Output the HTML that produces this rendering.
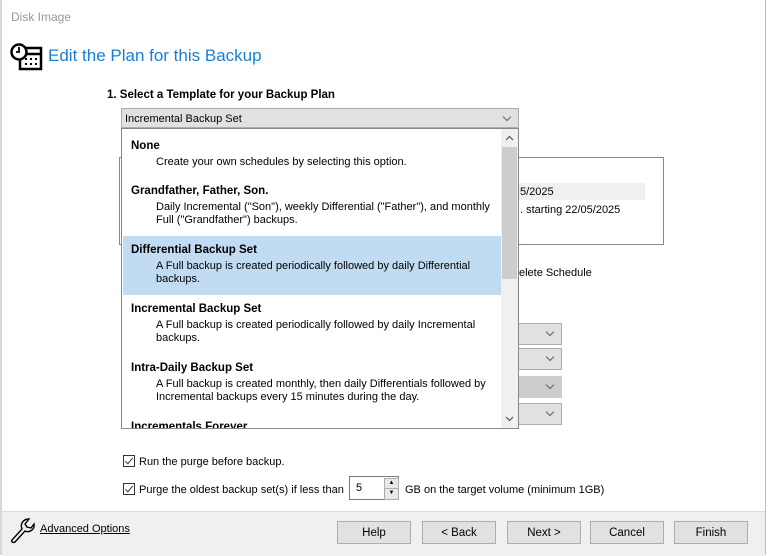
<!DOCTYPE html>
<html><head><style>
body{margin:0;width:770px;height:555px;position:relative;background:#fff;font-family:"Liberation Sans",Tahoma,sans-serif;font-size:11px;color:#000;overflow:hidden}
.a{position:absolute}
.cb{position:absolute;height:20px;border:1px solid #adadad;background:#e1e1e1;box-sizing:border-box}
.cb:after{content:"";position:absolute;right:8px;top:5px;width:5px;height:5px;border-right:1px solid #606060;border-bottom:1px solid #606060;transform:rotate(45deg)}
.btn{position:absolute;top:521px;width:74px;height:23px;border:1px solid #adadad;background:#e1e1e1;box-sizing:border-box;text-align:center;line-height:23px;font-size:11.5px}
.chk{position:absolute;width:12px;height:12px;border:1px solid #333;background:#fff;box-sizing:border-box}
.chk:after{content:"";position:absolute;left:3px;top:0px;width:3px;height:7px;border-right:1.3px solid #333;border-bottom:1.3px solid #333;transform:rotate(40deg)}
.it b{position:absolute;left:9px;font-size:11.5px}
.it span{position:absolute;left:34px;line-height:13px;width:340px}
</style></head><body>
<div class="a" style="left:0;top:0;width:2px;height:555px;background:#d8d8d8"></div>
<div class="a" style="left:765px;top:0;width:1px;height:555px;background:#bbb"></div>
<div class="a" style="left:11px;top:10px;color:#999;font-size:12px">Disk Image</div>
<svg class="a" style="left:10px;top:42px" width="34" height="30" viewBox="0 0 34 30">
<rect x="10" y="6" width="21" height="21" fill="#fff" stroke="#000" stroke-width="2.5"/>
<line x1="10" y1="12" x2="31" y2="12" stroke="#000" stroke-width="2.5"/>
<g fill="#000"><rect x="15" y="16" width="2" height="2"/><rect x="20" y="16" width="2" height="2"/><rect x="25" y="16" width="2" height="2"/><rect x="15" y="21" width="2" height="2"/><rect x="20" y="21" width="2" height="2"/><rect x="25" y="21" width="2" height="2"/></g>
<circle cx="9" cy="10" r="7.5" fill="#fff" stroke="#000" stroke-width="2.5"/>
<path d="M9 5v5h-3" fill="none" stroke="#000" stroke-width="1.8"/>
</svg>
<div class="a" style="left:48px;top:46px;color:#1a7fd4;font-size:17px">Edit the Plan for this Backup</div>
<div class="a" style="left:107px;top:89px;font-weight:bold;font-size:11.5px">1. Select a Template for your Backup Plan</div>
<div class="cb" style="left:121px;top:108px;width:398px;border-color:#adadad"><span class="a" style="left:3px;top:4px">Incremental Backup Set</span></div>
<div class="a" style="left:119px;top:157px;width:545px;height:88px;border:1px solid #828790;box-sizing:border-box"></div>
<div class="a" style="left:500px;top:183px;width:145px;height:17px;background:#f0f0f0"></div>
<div class="a" style="left:520px;top:186px">5/2025</div>
<div class="a" style="left:520px;top:204px">. starting 22/05/2025</div>
<div class="a" style="left:519px;top:267px">elete Schedule</div>
<div class="cb" style="left:505px;top:323px;width:57px;height:22px"></div>
<div class="cb" style="left:505px;top:348px;width:57px;height:22px"></div>
<div class="cb" style="left:505px;top:376px;width:57px;height:22px;background:#ccc;border-color:#ccc"></div>
<div class="cb" style="left:505px;top:403px;width:57px;height:22px"></div>
<div class="a" style="left:121px;top:128px;width:398px;height:301px;border:1px solid #828790;background:#fff;box-sizing:border-box;overflow:hidden">
<div class="a" style="left:1px;top:107px;width:378px;height:59px;background:#c1dcf2"></div>
<div class="it"><b style="top:11px">None</b><span style="top:27px">Create your own schedules by selecting this option.</span></div>
<div class="it"><b style="top:56px">Grandfather, Father, Son.</b><span style="top:72px">Daily Incremental ("Son"), weekly Differential ("Father"), and monthly<br>Full ("Grandfather") backups.</span></div>
<div class="it"><b style="top:115px">Differential Backup Set</b><span style="top:131px">A Full backup is created periodically followed by daily Differential<br>backups.</span></div>
<div class="it"><b style="top:174px">Incremental Backup Set</b><span style="top:190px">A Full backup is created periodically followed by daily Incremental<br>backups.</span></div>
<div class="it"><b style="top:233px">Intra-Daily Backup Set</b><span style="top:249px">A Full backup is created monthly, then daily Differentials followed by<br>Incremental backups every 15 minutes during the day.</span></div>
<div class="it"><b style="top:292px">Incrementals Forever</b></div>
<div class="a" style="left:379px;top:0;width:17px;height:299px;background:#f0f0f0"></div>
<div class="a" style="left:380px;top:18px;width:15px;height:132px;background:#cdcdcd"></div>
<svg class="a" style="left:383px;top:6px" width="9" height="6"><path d="M1 5L4.5 1.5L8 5" fill="none" stroke="#555" stroke-width="1.2"/></svg>
<svg class="a" style="left:383px;top:287px" width="9" height="6"><path d="M1 1L4.5 4.5L8 1" fill="none" stroke="#555" stroke-width="1.2"/></svg>
</div>
<div class="chk" style="left:123px;top:455px"></div>
<div class="a" style="left:139px;top:456px">Run the purge before backup.</div>
<div class="chk" style="left:123px;top:483px"></div>
<div class="a" style="left:139px;top:484px">Purge the oldest backup set(s) if less than</div>
<div class="a" style="left:349px;top:476px;width:50px;height:24px;border:1px solid #7a7a7a;box-sizing:border-box;background:#fff"><span class="a" style="left:6px;top:5px">5</span>
<div class="a" style="left:34px;top:1px;width:13px;height:10px;border:1px solid #adadad;background:#e8e8e8;font-size:6px;text-align:center;line-height:9px">&#9650;</div>
<div class="a" style="left:34px;top:11px;width:13px;height:10px;border:1px solid #adadad;background:#e8e8e8;font-size:6px;text-align:center;line-height:9px">&#9660;</div></div>
<div class="a" style="left:405px;top:484px">GB on the target volume (minimum 1GB)</div>
<div class="a" style="left:2px;top:511px;width:763px;height:44px;background:#f0f0f0;border-top:1px solid #ddd"></div>
<svg class="a" style="left:8px;top:516px" width="28" height="28" viewBox="0 0 28 28"><path d="M4 24 L14 13 C12 8 15 3 21 3 L17 8 L19 11 L23 12 L26 8 C27 14 21 17 17 15 L7 26 C5 27 3 26 4 24Z" fill="none" stroke="#000" stroke-width="1.4"/></svg>
<div class="a" style="left:40px;top:523px;text-decoration:underline">Advanced Options</div>
<div class="btn" style="left:337px">Help</div>
<div class="btn" style="left:422px">&lt; Back</div>
<div class="btn" style="left:507px">Next &gt;</div>
<div class="btn" style="left:590px">Cancel</div>
<div class="btn" style="left:674px">Finish</div>
</body></html>
